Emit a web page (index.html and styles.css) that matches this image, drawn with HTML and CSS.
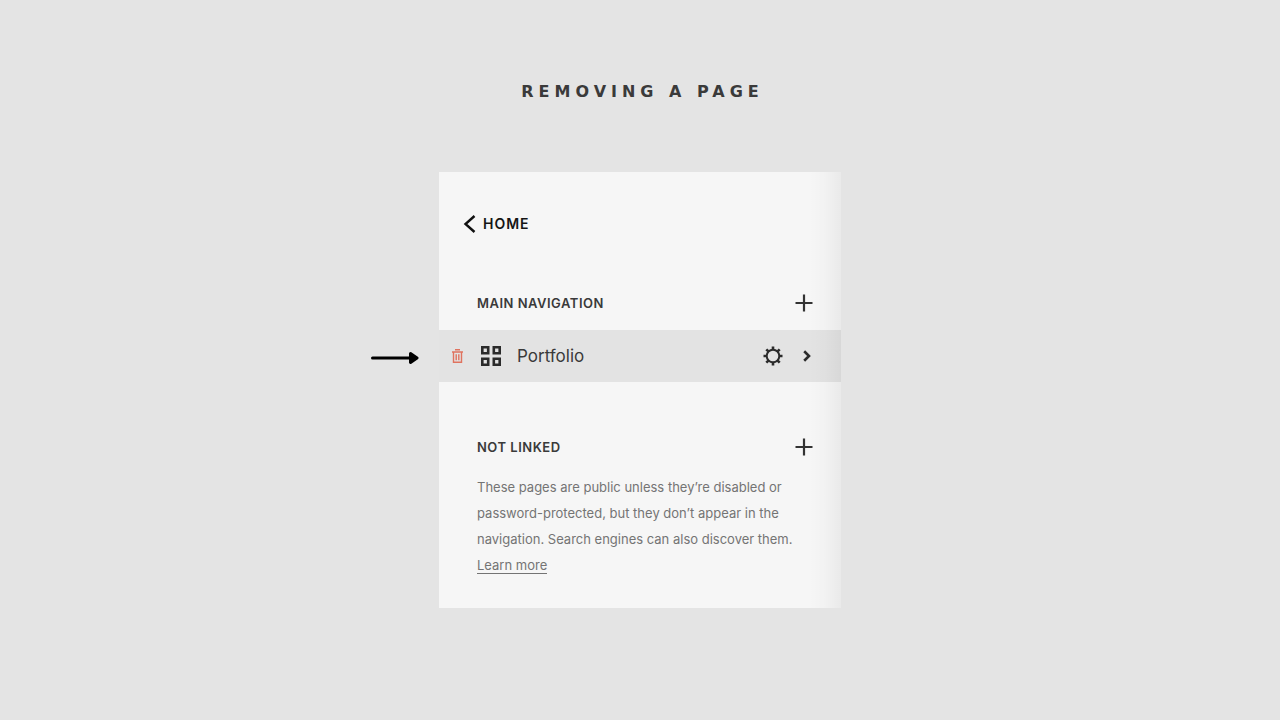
FILE: index.html
```html
<!DOCTYPE html>
<html lang="en">
<head>
  <meta charset="UTF-8">
  <meta name="viewport" content="width=device-width, initial-scale=1.0">
  <title>Removing a Page</title>
  <link rel="stylesheet" href="styles.css">
</head>
<body>
  <h1 class="title">REMOVING A PAGE</h1>

  <main class="panel">
    <a class="home" href="#">
      <svg width="13" height="18" viewBox="0 0 13 18" fill="none" stroke="#111" stroke-width="2.4">
        <path d="M11.500 1L2.500 9l9 8"/>
      </svg>
      HOME
    </a>

    <section>
      <div class="section-header">
        <h2>MAIN NAVIGATION</h2>
        <button class="icon-btn" aria-label="Add page">
          <svg width="18" height="18" viewBox="0 0 18 18" stroke="#333" stroke-width="2.2">
            <path d="M9 0.500v17M0.500 9h17"/>
          </svg>
        </button>
      </div>

      <div class="page-row">
        <svg class="arrow" width="48" height="14" viewBox="0 0 48 14">
          <path d="M1.500 7H40" stroke="#000" stroke-width="3" stroke-linecap="round"/>
          <path d="M39.500 2.500L46 7l-6.500 4.500z" stroke="#000" stroke-width="3" stroke-linejoin="round"/>
        </svg>
        <button class="icon-btn" aria-label="Delete page">
          <svg width="13" height="14" viewBox="0 0 13 14" fill="none" stroke="#e0735f" stroke-width="1.4">
            <path d="M4 0.700h5M1 3h11M2.500 3v10.300h8V3M5.200 5.200v6M7.800 5.200v6"/>
          </svg>
        </button>
        <svg class="page-icon" width="20" height="20" viewBox="0 0 20 20" fill="none" stroke="#2b2b2b" stroke-width="2.600">
          <path d="M1.300 1.300h5.900v5.900H1.300zM12.800 1.300h5.900v5.900h-5.900zM1.300 12.800h5.900v5.900H1.300zM12.800 12.800h5.900v5.900h-5.900z"/>
        </svg>
        <a class="page-name" href="#">Portfolio</a>
        <button class="icon-btn" aria-label="Page settings">
          <svg width="20" height="20" viewBox="0 0 20 20" fill="none" stroke="#2b2b2b">
            <circle cx="10" cy="10" r="6.300" stroke-width="2"/>
            <path stroke-width="2.600" d="M10 0.500v3M10 16.500v3M0.500 10h3M16.500 10h3M3.300 3.300l2.100 2.100M14.600 14.600l2.100 2.100M3.300 16.700l2.100-2.100M14.600 5.400l2.100-2.100"/>
          </svg>
        </button>
        <button class="icon-btn open-btn" aria-label="Open page">
          <svg width="8" height="12" viewBox="0 0 8 12" fill="none" stroke="#2b2b2b" stroke-width="2.600">
            <path d="M1.200 1.300L6 6l-4.800 4.700"/>
          </svg>
        </button>
      </div>
    </section>

    <section class="not-linked">
      <div class="section-header">
        <h2>NOT LINKED</h2>
        <button class="icon-btn" aria-label="Add unlinked page">
          <svg width="18" height="18" viewBox="0 0 18 18" stroke="#333" stroke-width="2.2">
            <path d="M9 0.500v17M0.500 9h17"/>
          </svg>
        </button>
      </div>
      <p class="description">
        These pages are public unless they’re disabled or<br>
        password-protected, but they don’t appear in the<br>
        navigation. Search engines can also discover them.<br>
        <a href="#">Learn more</a>
      </p>
    </section>
  </main>
</body>
</html>
```
FILE: styles.css
```css
* {
  margin: 0;
  padding: 0;
  box-sizing: border-box;
}

body {
  font-family: Inter, "Liberation Sans", sans-serif;
  min-height: 100vh;
  padding-top: 82px;
  background-color: #e4e4e4;
  color: #3a3a3a;
}

.title {
  margin-bottom: 70px;
  padding-left: 5px;
  font-family: "DejaVu Sans", sans-serif;
  font-size: 16px;
  font-weight: bold;
  line-height: 20px;
  letter-spacing: 5px;
  text-align: center;
}

.panel {
  position: relative;
  max-width: 402px;
  margin: 0 auto;
  padding: 42px 0 30px;
  background-color: #f6f6f6;
}

/* Shadow along the right edge */
.panel::after {
  content: "";
  position: absolute;
  top: 0;
  right: 0;
  bottom: 0;
  width: 32px;
  background: linear-gradient(to right, rgba(0, 0, 0, 0), rgba(0, 0, 0, 0.015) 50%, rgba(0, 0, 0, 0.05));
  pointer-events: none;
}

.home {
  display: flex;
  align-items: center;
  gap: 7px;
  margin-bottom: 59px;
  padding-left: 24px;
  color: #151515;
  font-size: 14px;
  font-weight: 600;
  line-height: 20px;
  letter-spacing: 1px;
  text-decoration: none;
}

.section-header {
  display: flex;
  align-items: center;
  justify-content: space-between;
  margin-bottom: 17px;
  padding: 0 28px 0 38px;
}

.section-header h2 {
  font-size: 13px;
  font-weight: 600;
  line-height: 20px;
  letter-spacing: 0.5px;
}

.icon-btn {
  display: flex;
  border: none;
  background: none;
  cursor: pointer;
}

.page-row {
  position: relative;
  display: flex;
  align-items: center;
  height: 52px;
  padding: 0 30px 0 12px;
  background-color: #e3e3e3;
}

.page-icon {
  margin: 0 16px 0 17px;
}

.page-name {
  flex: 1;
  color: #3a3a3a;
  font-size: 17px;
  text-decoration: none;
}

.open-btn {
  margin-left: 20px;
}

/* Pointer outside the panel */
.arrow {
  position: absolute;
  top: 21px;
  right: 100%;
  margin-right: 20px;
}

.not-linked {
  margin-top: 55px;
}

.description {
  padding: 0 38px;
  color: #747474;
  font-size: 13px;
  line-height: 26px;
  white-space: nowrap;
}

.description a {
  border-bottom: 1px solid #747474;
  color: #747474;
  text-decoration: none;
}
```
